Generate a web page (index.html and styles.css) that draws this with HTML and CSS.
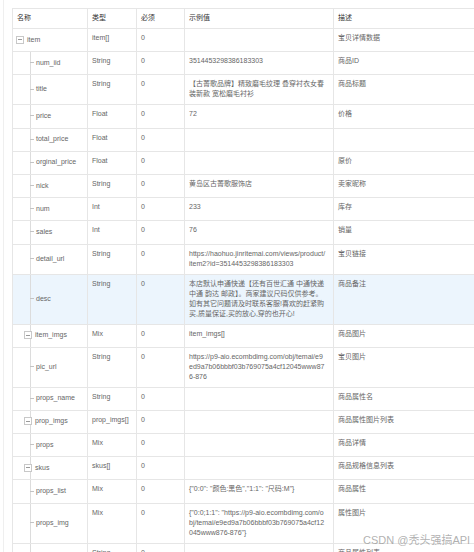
FILE: index.html
```html
<!DOCTYPE html>
<html lang="zh-CN">
<head>
<meta charset="utf-8">
<title>API 字段说明</title>
<link rel="stylesheet" href="styles.css">
</head>
<body>
<div class="page">
  <table class="fields">
    <colgroup>
      <col class="c-name"><col class="c-type"><col class="c-req"><col class="c-ex"><col class="c-desc">
    </colgroup>
    <thead>
      <tr><th>名称</th><th>类型</th><th>必须</th><th>示例值</th><th>描述</th></tr>
    </thead>
    <tbody>
      <tr>
        <td class="name root"><span class="nm"><i class="toggle"></i>item</span></td>
        <td>item[]</td><td>0</td><td></td><td>宝贝详情数据</td>
      </tr>
      <tr>
        <td class="name child"><span class="nm leaf">num_iid</span></td>
        <td>String</td><td>0</td><td>3514453298386183303</td><td>商品ID</td>
      </tr>
      <tr>
        <td class="name child"><span class="nm leaf">title</span></td>
        <td>String</td><td>0</td><td>【古菁歌品牌】精致磨毛纹理 叠穿衬衣女春<br>装新款 宽松磨毛衬衫</td><td>商品标题</td>
      </tr>
      <tr>
        <td class="name child"><span class="nm leaf">price</span></td>
        <td>Float</td><td>0</td><td>72</td><td>价格</td>
      </tr>
      <tr>
        <td class="name child"><span class="nm leaf">total_price</span></td>
        <td>Float</td><td>0</td><td></td><td></td>
      </tr>
      <tr>
        <td class="name child"><span class="nm leaf">orginal_price</span></td>
        <td>Float</td><td>0</td><td></td><td>原价</td>
      </tr>
      <tr>
        <td class="name child"><span class="nm leaf">nick</span></td>
        <td>String</td><td>0</td><td>黄岛区古菁歌服饰店</td><td>卖家昵称</td>
      </tr>
      <tr>
        <td class="name child"><span class="nm leaf">num</span></td>
        <td>Int</td><td>0</td><td>233</td><td>库存</td>
      </tr>
      <tr>
        <td class="name child"><span class="nm leaf">sales</span></td>
        <td>Int</td><td>0</td><td>76</td><td>销量</td>
      </tr>
      <tr>
        <td class="name child"><span class="nm leaf">detail_url</span></td>
        <td>String</td><td>0</td><td>https://haohuo.jinritemai.com/views/product/<br>item2?id=3514453298386183303</td><td>宝贝链接</td>
      </tr>
      <tr class="hover">
        <td class="name child"><span class="nm leaf">desc</span></td>
        <td>String</td><td>0</td><td>本店默认申通快递【还有百世汇通 中通快递<br>中通 韵达 邮政】。商家建议尺码仅供参考。<br>如有其它问题请及时联系客服!喜欢的赶紧购<br>买,质量保证,买的放心,穿的也开心!</td><td>商品备注</td>
      </tr>
      <tr>
        <td class="name child"><span class="nm"><i class="toggle"></i>item_imgs</span></td>
        <td>Mix</td><td>0</td><td>item_imgs[]</td><td>商品图片</td>
      </tr>
      <tr>
        <td class="name child"><span class="nm leaf">pic_url</span></td>
        <td>String</td><td>0</td><td>https://p9-aio.ecombdimg.com/obj/temai/e9<br>ed9a7b06bbbf03b769075a4cf12045www87<br>6-876</td><td>宝贝图片</td>
      </tr>
      <tr>
        <td class="name child"><span class="nm leaf">props_name</span></td>
        <td>String</td><td>0</td><td></td><td>商品属性名</td>
      </tr>
      <tr>
        <td class="name child"><span class="nm"><i class="toggle"></i>prop_imgs</span></td>
        <td>prop_imgs[]</td><td>0</td><td></td><td>商品属性图片列表</td>
      </tr>
      <tr>
        <td class="name child"><span class="nm leaf">props</span></td>
        <td>Mix</td><td>0</td><td></td><td>商品详情</td>
      </tr>
      <tr>
        <td class="name child"><span class="nm"><i class="toggle"></i>skus</span></td>
        <td>skus[]</td><td>0</td><td></td><td>商品规格信息列表</td>
      </tr>
      <tr>
        <td class="name child"><span class="nm leaf">props_list</span></td>
        <td>Mix</td><td>0</td><td>{"0:0": "颜色:黑色","1:1": "尺码:M"}</td><td>商品属性</td>
      </tr>
      <tr>
        <td class="name child"><span class="nm leaf">props_img</span></td>
        <td>Mix</td><td>0</td><td>{"0:0;1:1": "https://p9-aio.ecombdimg.com/o<br>bj/temai/e9ed9a7b06bbbf03b769075a4cf12<br>045www876-876"}</td><td>属性图片</td>
      </tr>
      <tr>
        <td class="name child"><span class="nm leaf">sku_list</span></td>
        <td>String</td><td>0</td><td>&nbsp;<br>&nbsp;<br>&nbsp;</td><td>商品属性列表</td>
      </tr>
    </tbody>
  </table>
  <div class="watermark">CSDN @秃头强搞API</div>
</div>
</body>
</html>
```
FILE: styles.css
```css
html, body {
  margin: 0;
  padding: 0;
  background: #fff;
  overflow: hidden;
  height: 552px;
}

.page {
  position: relative;
  margin-left: 3px;
  border-left: 1px solid #efefef;
  padding: 8px 0 0 8px;
  height: 552px;
  box-sizing: border-box;
  font-family: "Liberation Sans", "Noto Sans CJK SC", sans-serif;
  font-size: 7px;
  line-height: 10px;
  color: #666;
}

.fields {
  border-collapse: collapse;
  table-layout: fixed;
  width: 500px;
}

.c-name { width: 75px; }
.c-type { width: 49px; }
.c-req { width: 48px; }
.c-ex { width: 149px; }
.c-desc { width: 179px; }

.fields th,
.fields td {
  border: 1px solid #e6e6e6;
  padding: 4px 4px 5px 4px;
  text-align: left;
  vertical-align: top;
  white-space: nowrap;
  overflow: hidden;
}

.fields th {
  font-weight: normal;
  color: #333;
}

.fields td.name {
  vertical-align: middle;
}

.fields td.root {
  padding-left: 3px;
}

.fields td.child {
  padding-left: 11px;
  background: linear-gradient(#dcdcdc, #dcdcdc) no-repeat 17px 0 / 1px 100%;
}

.fields tr.hover td {
  background-color: #ecf5fd;
}

.nm {
  display: flex;
  align-items: center;
  height: 13.2px;
}

.nm.leaf::before {
  content: "";
  width: 4px;
  height: 1px;
  background: #c4c4c4;
  margin-left: 6px;
  margin-right: 2px;
}

.toggle {
  display: block;
  width: 8px;
  height: 8px;
  box-sizing: border-box;
  border: 1px solid #c8c8c8;
  background: linear-gradient(#9a9a9a, #9a9a9a) center / 4px 1px no-repeat, #fff;
  margin-right: 3px;
  flex: none;
}

.watermark {
  position: absolute;
  left: 359px;
  top: 533px;
  font-family: "Liberation Sans", "Noto Sans CJK SC", sans-serif;
  font-size: 11px;
  line-height: 14px;
  color: rgba(150, 150, 150, 0.75);
  white-space: nowrap;
}
```
